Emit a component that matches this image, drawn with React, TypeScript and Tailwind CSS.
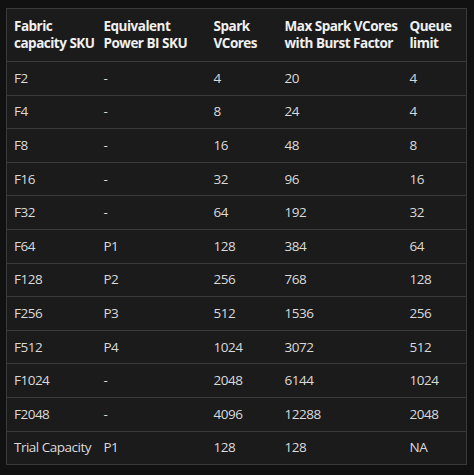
import React from "react";

const rows: string[][] = [
  ["F2", "-", "4", "20", "4"],
  ["F4", "-", "8", "24", "4"],
  ["F8", "-", "16", "48", "8"],
  ["F16", "-", "32", "96", "16"],
  ["F32", "-", "64", "192", "32"],
  ["F64", "P1", "128", "384", "64"],
  ["F128", "P2", "256", "768", "128"],
  ["F256", "P3", "512", "1536", "256"],
  ["F512", "P4", "1024", "3072", "512"],
  ["F1024", "-", "2048", "6144", "1024"],
  ["F2048", "-", "4096", "12288", "2048"],
  ["Trial Capacity", "P1", "128", "128", "NA"],
];

export default function App() {
  return (
    <div
      className="w-[474px] h-[475px] bg-[#111111] pt-[8px] pl-[6px]"
      style={{ fontFamily: '"Open Sans", "Noto Sans", sans-serif' }}
    >
      <table className="w-[460px] border-collapse bg-[#1b1b1b] border-x border-b border-t border-[#3a3a3a] text-[13.5px] tracking-[-0.5px] table-fixed">
        <colgroup>
          <col className="w-[90px]" />
          <col className="w-[110px]" />
          <col className="w-[71px]" />
          <col className="w-[125px]" />
          <col className="w-[64px]" />
        </colgroup>
        <thead>
          <tr className="h-[53px] border-b border-[#3a3a3a]">
            {[
              ["Fabric", "capacity SKU"],
              ["Equivalent", "Power BI SKU"],
              ["Spark", "VCores"],
              ["Max Spark VCores", "with Burst Factor"],
              ["Queue", "limit"],
            ].map((h, i) => (
              <th
                key={i}
                className="text-left align-middle font-bold text-[#f0f0f0] pl-[7px] leading-[17px] whitespace-nowrap"
              >
                {h[0]}
                <br />
                {h[1]}
              </th>
            ))}
          </tr>
        </thead>
        <tbody>
          {rows.map((r, i) => (
            <tr key={i} className="h-[33.6px] border-b border-[#3a3a3a]">
              {r.map((c, j) => (
                <td
                  key={j}
                  className="pl-[7px] align-middle text-[#dadada] whitespace-nowrap leading-[17px]"
                >
                  {c}
                </td>
              ))}
            </tr>
          ))}
        </tbody>
      </table>
    </div>
  );
}
